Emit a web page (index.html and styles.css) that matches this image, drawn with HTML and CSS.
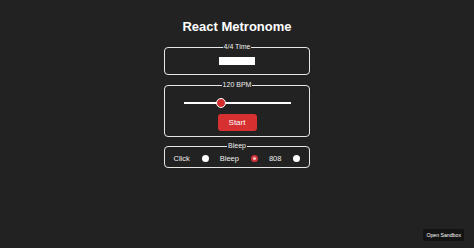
FILE: index.html
```html
<!DOCTYPE html>
<html>
<head>
<meta charset="utf-8">
<link rel="stylesheet" href="styles.css">
</head>
<body>
<div class="app">
  <h1 class="title">React Metronome</h1>
  <fieldset class="box box-time">
    <legend>4/4 Time</legend>
    <input class="time-input" type="text">
  </fieldset>
  <fieldset class="box box-bpm">
    <legend>120 BPM</legend>
    <input class="slider" type="range" min="60" max="240" value="120">
    <button class="start">Start</button>
  </fieldset>
  <fieldset class="box box-sound">
    <legend>Bleep</legend>
    <label class="opt">Click <input type="radio" name="s"></label>
    <label class="opt">Bleep <input type="radio" name="s" checked></label>
    <label class="opt">808 <input type="radio" name="s"></label>
  </fieldset>
</div>
<div class="sandbox">Open Sandbox</div>
</body>
</html>
```
FILE: styles.css
```css
html, body {
  margin: 0;
  padding: 0;
  background: #222222;
  color: #ffffff;
  font-family: "Liberation Sans", Arial, sans-serif;
  height: 100%;
}
.app {
  display: flex;
  flex-direction: column;
  align-items: center;
  padding-top: 19px;
}
.title {
  margin: 0 0 8px 0;
  font-size: 13px;
  line-height: 16px;
  font-weight: bold;
}
.box {
  box-sizing: border-box;
  width: 146px;
  margin: 0;
  border: 1px solid #e6e6e6;
  border-radius: 4px;
  display: flex;
  flex-direction: column;
  align-items: center;
}
.box legend {
  font-size: 7px;
  line-height: 8px;
  padding: 0 1px;
  margin: 0 auto;
  color: #eeeeee;
}
.box-time {
  padding: 6px 0 9px;
}
.time-input {
  width: 36px;
  height: 8px;
  box-sizing: border-box;
  border: none;
  padding: 0;
  margin: 0;
  background: #ffffff;
  border-radius: 0;
  outline: none;
}
.box-bpm {
  margin-top: 6px;
  padding: 7px 0 5px;
}
.slider {
  -webkit-appearance: none;
  appearance: none;
  width: 107px;
  height: 10px;
  margin: 2px 0 6px;
  padding: 0;
  background: transparent;
}
.slider::-webkit-slider-runnable-track {
  height: 2px;
  background: #ffffff;
}
.slider::-webkit-slider-thumb {
  -webkit-appearance: none;
  width: 10px;
  height: 10px;
  margin-top: -4px;
  border-radius: 50%;
  background: #d32f2f;
  border: 1px solid #ffffff;
  box-sizing: border-box;
}
.start {
  width: 39px;
  height: 17px;
  background: #d63031;
  color: #ffffff;
  border: none;
  border-radius: 3px;
  font-family: "Liberation Sans", Arial, sans-serif;
  font-size: 8px;
  padding: 0;
}
.box-sound {
  margin-top: 5px;
  padding: 4px 0 4px;
  flex-direction: row;
  justify-content: center;
  gap: 11px;
}
.opt {
  display: flex;
  align-items: center;
  gap: 12px;
  font-size: 7.5px;
  color: #eeeeee;
}
.opt input {
  -webkit-appearance: none;
  appearance: none;
  width: 7px;
  height: 7px;
  margin: 0;
  border-radius: 50%;
  background: #ffffff;
  box-sizing: border-box;
}
.opt input:checked {
  background: #f2c6c8;
  border: 2px solid #d3343b;
}
.sandbox {
  position: absolute;
  right: 10px;
  bottom: 7px;
  background: #131313;
  color: #ffffff;
  font-size: 5.2px;
  line-height: 12px;
  padding: 0 3px;
  border-radius: 2px;
}
```
